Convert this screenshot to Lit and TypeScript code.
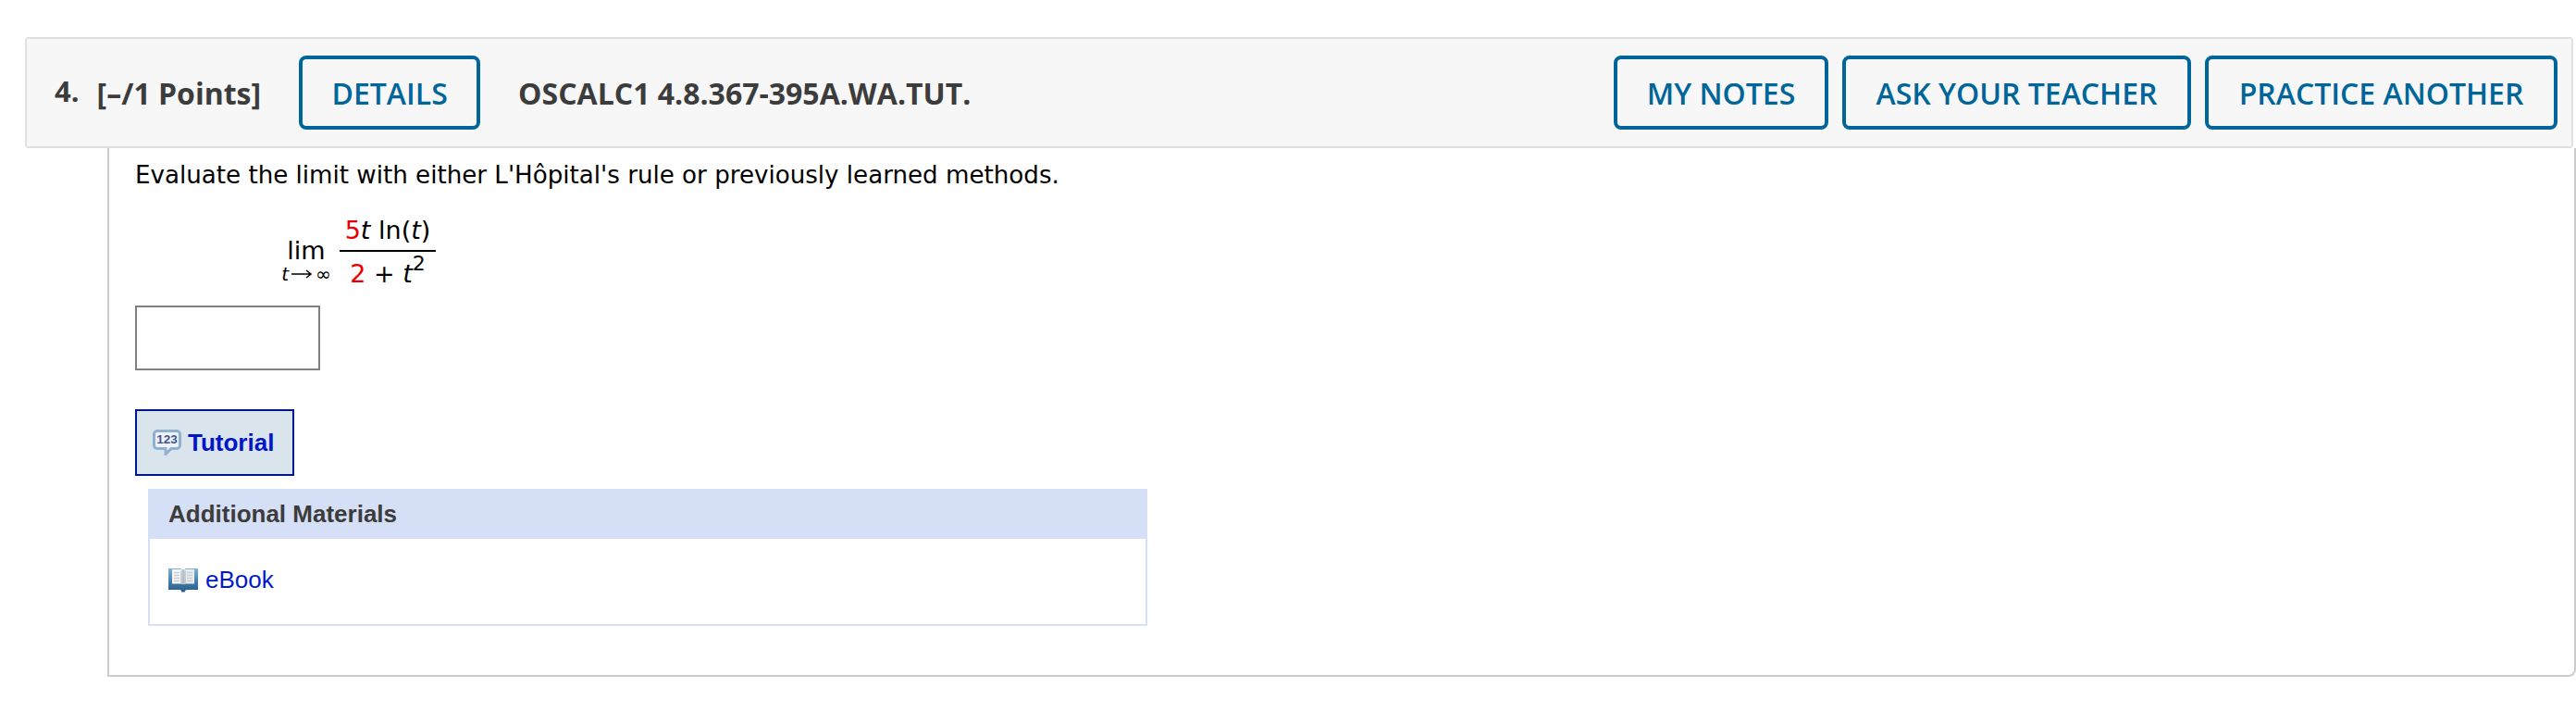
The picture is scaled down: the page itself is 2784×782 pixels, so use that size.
import { LitElement, html, css } from "lit";
import { customElement } from "lit/decorators.js";

@customElement("app-root")
export class AppRoot extends LitElement {
  static styles = css`
    :host { display: block; width: 2784px; height: 782px; background: #fff; padding-top: 40px; box-sizing: border-box; overflow: hidden; }
    .head { box-sizing: border-box; margin-left: 27px; width: 2754px; height: 120px; background: #f7f7f7; border: 2px solid #e0e0e0; border-radius: 4px; display: flex; align-items: center; padding: 0 15px 0 30px; font: 600 32px "Open Sans", sans-serif; color: #3c3c3c; }
    .num { margin-right: 19px; position: relative; top: -2px; font-weight: 700; font-size: 31px; }
    .pts { margin-right: 41px; font-weight: 700; }
    .code { margin-left: 41px; flex: 1; font-weight: 700; }
    .btn { box-sizing: border-box; flex: none; height: 80px; border: 4px solid #00669a; border-radius: 8px; display: flex; align-items: center; justify-content: center; color: #00669a; white-space: nowrap; }
    .b-details { width: 196px; }
    .b-notes { width: 232px; margin-right: 15px; }
    .b-ask { width: 377px; margin-right: 15px; }
    .b-prac { width: 381px; }
    .panel { box-sizing: border-box; margin-left: 116px; width: 2668px; height: 571px; border: 2px solid #ccc; border-top: 0; border-bottom-right-radius: 8px; padding-left: 28px; font-family: "DejaVu Sans", sans-serif; color: #000; }
    .q { font-size: 26.14px; line-height: 30px; padding-top: 14px; height: 30px; white-space: nowrap; }
    .math { display: flex; align-items: flex-start; margin: 31px 0 0 157px; font-size: 27px; height: 79px; }
    .lim { width: 56px; display: flex; flex-direction: column; align-items: center; margin-right: 8px; padding-top: 20px; }
    .lim-top { line-height: 32px; }
    .lim-sub { font-size: 20px; line-height: 18px; white-space: nowrap; display: flex; align-items: center; }
    .arrow { display: block; margin: 0 3px; }
    i { font-style: italic; }
    .frac { width: 104px; display: flex; flex-direction: column; align-items: center; white-space: nowrap; }
    .n { line-height: 27px; height: 35px; }
    .d { line-height: 36px; padding-top: 6px; border-top: 2px solid #000; width: 100%; text-align: center; }
    .red { color: #e60000; }
    sup { font-size: 22px; line-height: 0; vertical-align: 13px; }
    .input { box-sizing: border-box; width: 200px; height: 70px; border: 2px solid #808080; margin-top: 16px; background: #fff; }
    .tut { box-sizing: border-box; margin-top: 42px; width: 172px; height: 72px; background: #d9e4ec; border: 2px solid #00178f; display: flex; align-items: center; padding-left: 17px; gap: 7px; font: 700 26px "Liberation Sans", Arial, sans-serif; color: #0015c8; }
    .tut svg { display: block; }
    .am { box-sizing: border-box; margin: 14px 0 0 14px; width: 1080px; height: 148px; border: 2px solid #d5dff5; border-top: 0; }
    .am-h { box-sizing: border-box; margin: 0 -2px; height: 54px; background: #d5dff5; padding-left: 22px; font: 700 26px/54px "Liberation Sans", Arial, sans-serif; color: #3c3c3c; }
    .am-b { display: flex; align-items: center; gap: 8px; padding: 28px 0 0 20px; font: 26px/32px "Liberation Sans", Arial, sans-serif; color: #0019d0; }
    .am-b svg { display: block; }
    .bubble-txt { font: 700 13.5px "Liberation Sans", Arial, sans-serif; fill: #44558f; }
  `;

  render() {
    return html`
      <div class="head">
        <span class="num">4.</span>
        <span class="pts">[–/1 Points]</span>
        <span class="btn b-details">DETAILS</span>
        <span class="code">OSCALC1 4.8.367-395A.WA.TUT.</span>
        <span class="btn b-notes">MY NOTES</span>
        <span class="btn b-ask">ASK YOUR TEACHER</span>
        <span class="btn b-prac">PRACTICE ANOTHER</span>
      </div>
      <div class="panel">
        <div class="q">Evaluate the limit with either L'Hôpital's rule or previously learned methods.</div>
        <div class="math">
          <div class="lim">
            <span class="lim-top">lim</span>
            <span class="lim-sub"><i>t</i><svg class="arrow" width="23" height="12" viewBox="0 0 23 12"><path d="M0 6H21M16 2l5 4-5 4" fill="none" stroke="#000" stroke-width="1.5"/></svg>∞</span>
          </div>
          <div class="frac">
            <div class="n"><span class="red">5</span><i>t</i> ln(<i>t</i>)</div>
            <div class="d"><span class="red">2</span> + <i>t</i><sup>2</sup></div>
          </div>
        </div>
        <div class="input"></div>
        <div class="tut">
          <svg width="31" height="28" viewBox="0 0 31 28"><path d="M5 1.500H26a3.500 3.500 0 0 1 3.500 3.500V17a3.500 3.500 0 0 1-3.500 3.500H20L14 26.500V20.500H5A3.500 3.500 0 0 1 1.500 17V5A3.500 3.500 0 0 1 5 1.500Z" fill="#eef2fa" stroke="#8fb0d0" stroke-width="3"/><text class="bubble-txt" x="15.500" y="15" text-anchor="middle">123</text></svg>
          <span>Tutorial</span>
        </div>
        <div class="am">
          <div class="am-h">Additional Materials</div>
          <div class="am-b">
            <svg width="32" height="28" viewBox="0 0 32 28"><defs><linearGradient id="bk" x1="0" y1="0" x2="0" y2="1"><stop offset="0" stop-color="#7fb2d4"/><stop offset=".6" stop-color="#3f7aa6"/><stop offset="1" stop-color="#2a5c8a"/></linearGradient></defs><path d="M0 2H13L16 3.500 19 2H32V25H19L17.500 27.500H14.500L13 25H0Z" fill="url(#bk)"/><path d="M4 3H14.500L15.500 4.500V19.500L14 18.500H4Z" fill="#f3f5f6"/><path d="M28 3H17.500L16.500 4.500V19.500L18 18.500H28Z" fill="#e9ecee"/><path d="M13 4.500h6v14.500h-6z" fill="#b9bfc4" opacity=".75"/><path d="M6 6.500h6M6 9.500h6M6 12.500h6M6 15.500h6M20 6.500h6M20 9.500h6M20 12.500h6M20 15.500h6" stroke="#c9ced2" stroke-width="1.300"/></svg>
            <span>eBook</span>
          </div>
        </div>
      </div>
    `;
  }
}
